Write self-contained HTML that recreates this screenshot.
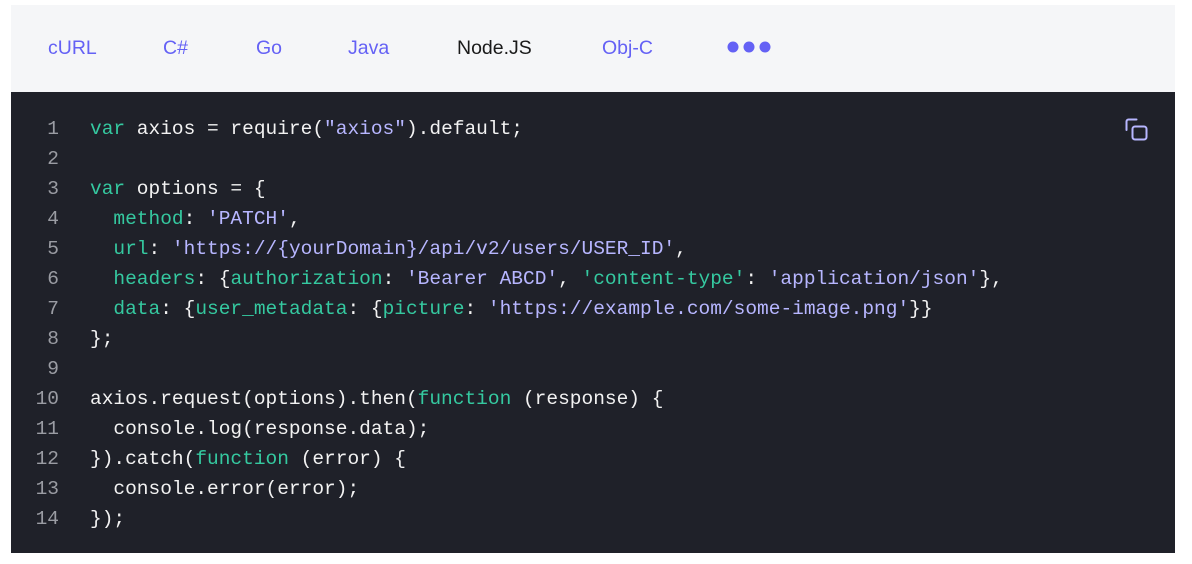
<!DOCTYPE html>
<html><head><style>
body{margin:0;background:#fff;width:1192px;height:564px;overflow:hidden}
.panel{position:absolute;left:11px;top:5px;width:1164px;height:548px}
.tabs{height:87px;background:#f5f6f8;position:relative;font-family:"Liberation Sans",sans-serif;font-size:19.5px}
.tabs span{position:absolute;top:32px;color:#6461f5}
.code{position:absolute;top:87px;left:0;right:0;bottom:0;background:#1f2129}
pre{margin:0;position:absolute;top:22px;left:0;font-family:"Liberation Mono",monospace;font-size:19.5px;line-height:30px;color:#f2f2f2}
.ln{display:inline-block;width:48px;text-align:right;color:#9a9ca3;margin-right:31px}
.k{color:#35c9a0}.s{color:#b7b6ff}
</style></head><body>
<div class="panel">
<div class="tabs">
<span style="left:37px">cURL</span><span style="left:152px">C#</span><span style="left:245px">Go</span><span style="left:337px">Java</span><span style="left:446px;color:#1a1a1a">Node.JS</span><span style="left:591px">Obj-C</span>
<svg style="position:absolute;left:716px;top:35px" width="44" height="14"><circle cx="6" cy="7" r="5.5" fill="#6461f5"/><circle cx="22" cy="7" r="5.5" fill="#6461f5"/><circle cx="38" cy="7" r="5.5" fill="#6461f5"/></svg>
</div>
<div class="code">
<svg style="position:absolute;left:1114px;top:26px" width="24" height="24" viewBox="0 0 24 24" fill="none" stroke="#b7b6ff" stroke-width="2" stroke-linecap="round"><path d="M1.5 12V3.5a2 2 0 0 1 2-2h8"/><rect x="7.5" y="8.5" width="14" height="13" rx="2.5"/></svg>
<pre><span class="ln">1</span><span class="k">var</span> axios = require(<span class="s">"axios"</span>).default;
<span class="ln">2</span>
<span class="ln">3</span><span class="k">var</span> options = {
<span class="ln">4</span>  <span class="k">method</span>: <span class="s">'PATCH'</span>,
<span class="ln">5</span>  <span class="k">url</span>: <span class="s">'https://{yourDomain}/api/v2/users/USER_ID'</span>,
<span class="ln">6</span>  <span class="k">headers</span>: {<span class="k">authorization</span>: <span class="s">'Bearer ABCD'</span>, <span class="k">'content-type'</span>: <span class="s">'application/json'</span>},
<span class="ln">7</span>  <span class="k">data</span>: {<span class="k">user_metadata</span>: {<span class="k">picture</span>: <span class="s">'https://example.com/some-image.png'</span>}}
<span class="ln">8</span>};
<span class="ln">9</span>
<span class="ln">10</span>axios.request(options).then(<span class="k">function</span> (response) {
<span class="ln">11</span>  console.log(response.data);
<span class="ln">12</span>}).catch(<span class="k">function</span> (error) {
<span class="ln">13</span>  console.error(error);
<span class="ln">14</span>});</pre>
</div>
</div>
</body></html>
